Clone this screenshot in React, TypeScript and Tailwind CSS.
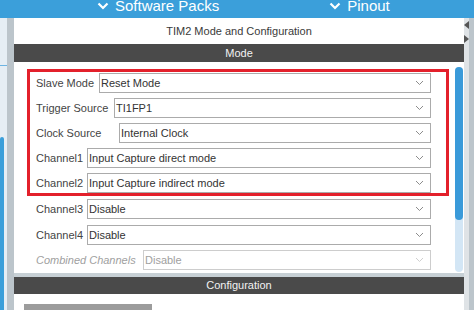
import React from "react";

type Row = { label: string; value: string; labelW: string; disabled?: boolean };

const boxed: Row[] = [
  { label: "Slave Mode", value: "Reset Mode", labelW: "w-[63px]" },
  { label: "Trigger Source", value: "TI1FP1", labelW: "w-[78px]" },
  { label: "Clock Source", value: "Internal Clock", labelW: "w-[83px]" },
  { label: "Channel1", value: "Input Capture direct mode", labelW: "w-[51px]" },
  { label: "Channel2", value: "Input Capture indirect mode", labelW: "w-[51px]" },
];

const Chevron = ({ light }: { light?: boolean }) => (
  <svg width="9" height="6" viewBox="0 0 9 6" className="shrink-0">
    <path d="M1 1 L4.5 4.5 L8 1" fill="none" stroke={light ? "#cfcfcf" : "#8c8c8c"} strokeWidth="1" />
  </svg>
);

const SelectRow = ({ row, className = "" }: { row: Row; className?: string }) => (
  <div className={`flex h-[20px] items-center ${className}`}>
    <span
      className={`${row.labelW} shrink-0 whitespace-nowrap ${row.disabled ? "italic text-[#a0a0a0]" : "text-[#444]"}`}
    >
      {row.label}
    </span>
    <div
      className={`flex h-[20px] flex-1 items-center justify-between border bg-white pl-[1px] pr-[6px] ${
        row.disabled ? "border-[#cdcdcd] text-[#a0a0a0]" : "border-[#ababab] text-[#333]"
      }`}
    >
      <span className="whitespace-nowrap">{row.value}</span>
      <Chevron light={row.disabled} />
    </div>
  </div>
);

const TopChevron = () => (
  <svg width="12" height="8" viewBox="0 0 12 8">
    <path d="M1.5 1.5 L6 6 L10.5 1.5" fill="none" stroke="white" strokeWidth="2.2" />
  </svg>
);

export default function App() {
  return (
    <div className="relative h-[310px] w-[474px] overflow-hidden bg-[#bcc5cb] font-['Liberation_Sans',Arial,sans-serif] text-[11px]">
      {/* top tool bar */}
      <div className="flex h-[18px] items-start bg-[#3b9fda] text-[15px] leading-[15px] text-white">
        <div className="ml-[97px] mt-[2px] flex items-start gap-[6px]">
          <TopChevron />
          <span className="-mt-[4px]">Software Packs</span>
        </div>
        <div className="ml-[110px] mt-[2px] flex items-start gap-[6px]">
          <TopChevron />
          <span className="-mt-[4px]">Pinout</span>
        </div>
      </div>

      <div className="flex h-[292px]">
        {/* left neighbour panel edge */}
        <div className="flex w-[7px] flex-col bg-[#e6eef4]">
          <div className="mt-[47px] h-[1px] bg-[#6db4e2]" />
          <div className="mt-[71px] h-[174px] w-[4px] rounded-t-[3px] bg-[#3b9fda]" />
        </div>
        <div className="w-[7px]" />

        {/* main panel column */}
        <div className="flex w-[450px] flex-col">
          <div className="bg-white">
            <div className="flex h-[26px] items-center justify-center text-[#3a3a3a]">
              TIM2 Mode and Configuration
            </div>
            <div className="flex h-[18px] items-center justify-center bg-[#4a4a4a] text-[#f2f2f2]">Mode</div>
            <div className="flex h-[211px]">
              <div className="flex w-[441px] flex-col pl-[13px]">
                <div className="mt-[7px] flex w-[422px] flex-col gap-[5px] border-[3px] border-[#e3202b] pb-0 pl-[6px] pr-[15px] pt-[1px]">
                  {boxed.map((r) => (
                    <SelectRow key={r.label} row={r} />
                  ))}
                </div>
                <div className="flex w-[404px] flex-col pl-[9px]">
                  <SelectRow className="mt-[3px]" row={{ label: "Channel3", value: "Disable", labelW: "w-[51px]" }} />
                  <SelectRow className="mt-[6px]" row={{ label: "Channel4", value: "Disable", labelW: "w-[51px]" }} />
                  <SelectRow
                    className="mt-[5px]"
                    row={{ label: "Combined Channels", value: "Disable", labelW: "w-[107px]", disabled: true }}
                  />
                </div>
              </div>
              {/* scrollbar */}
              <div className="mt-[5px] mb-[1px] w-[8px] rounded-full bg-[#d3e6f5]">
                <div className="h-[153px] rounded-full bg-[#3a9ad9]" />
              </div>
            </div>
          </div>
          <div className="h-[7px] bg-[#c7d0d5]" />
          <div className="flex-1 bg-white">
            <div className="flex h-[17px] items-center justify-center bg-[#4a4a4a] text-[#f2f2f2]">
              Configuration
            </div>
            <div className="ml-[10px] mt-[10px] h-[6px] w-[128px] bg-[#9c9c9c]" />
          </div>
        </div>

        {/* right collapse arrows */}
        <div className="flex w-[5px] flex-col items-center bg-[#dfe3e6]">
          <svg width="5" height="8" viewBox="0 0 5 8" className="mt-[3px]">
            <polygon points="5,0 0,4 5,8" fill="#555" />
          </svg>
          <svg width="5" height="8" viewBox="0 0 5 8" className="mt-[6px]">
            <polygon points="0,0 5,4 0,8" fill="#555" />
          </svg>
        </div>
      </div>
    </div>
  );
}
